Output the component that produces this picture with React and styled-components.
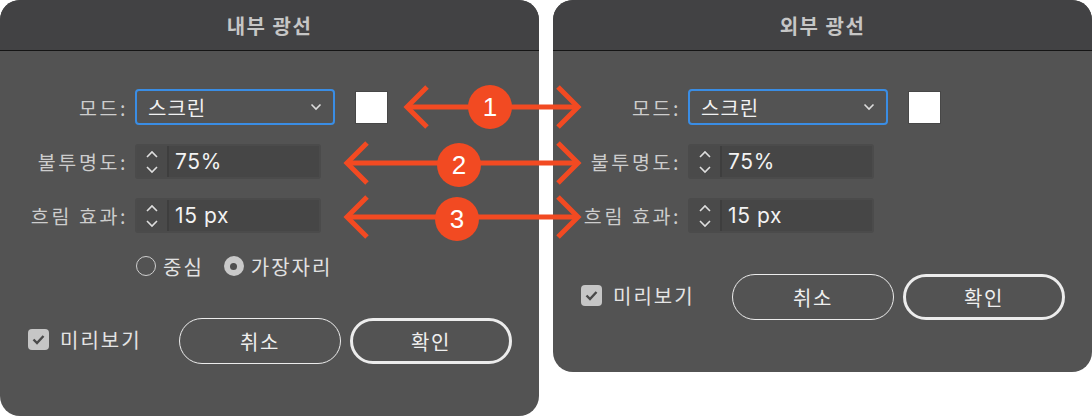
import styled, { createGlobalStyle } from "styled-components";

const panels = [
  { title: "내부 광선", edge: true },
  { title: "외부 광선", edge: false },
];

const markers = [
  { n: 1, y: 107, from: 407, cx: 490, cy: 107 },
  { n: 2, y: 163, from: 347, cx: 459, cy: 165 },
  { n: 3, y: 217, from: 347, cx: 457, cy: 219 },
];

const Global = createGlobalStyle`
  html, body {
    margin: 0;
    background: #fff;
  }
  body {
    font-family: "Inter", "Noto Sans CJK KR", sans-serif;
  }
`;

const Page = styled.div`
  position: relative;
  display: flex;
  align-items: flex-start;
  gap: 14px;
  width: 1092px;
  height: 418px;
  background: #fff;
  overflow: hidden;
`;

const Panel = styled.div`
  width: 539px;
  background: #535353;
  border-radius: 20px;
  overflow: hidden;
  padding-bottom: 52px;
`;

const TitleBar = styled.div`
  height: 50px;
  background: #424244;
  border-bottom: 1px solid #151515;
  display: flex;
  align-items: center;
  justify-content: center;
  font-family: "Noto Sans CJK KR", sans-serif;
  font-weight: 700;
  font-size: 20px;
  color: #c6c6c6;
  letter-spacing: 1.5px;
`;

const Form = styled.div`
  display: grid;
  grid-template-columns: 126px auto;
  column-gap: 9px;
  row-gap: 19px;
  align-items: center;
  justify-items: start;
  padding-top: 38px;
`;

const Label = styled.span`
  justify-self: end;
  margin-right: -2px;
  font-family: "Noto Sans CJK KR", sans-serif;
  font-size: 19.5px;
  color: #cdcdcd;
  letter-spacing: 2.6px;
  white-space: nowrap;
`;

const ModeRow = styled.div`
  display: flex;
  align-items: center;
  gap: 21px;
`;

const Select = styled.div`
  box-sizing: border-box;
  width: 200px;
  height: 36px;
  border: 2px solid #3a8de4;
  border-radius: 4px;
  padding: 0 11px 0 11px;
  display: flex;
  align-items: center;
  justify-content: space-between;
  font-family: "Noto Sans CJK KR", sans-serif;
  font-size: 20px;
  letter-spacing: 1px;
  color: #f2f2f2;
`;

const Swatch = styled.div`
  width: 31px;
  height: 31px;
  background: #fff;
  box-shadow: 0 0 0 1px #474747;
`;

const NumberField = styled.div`
  box-sizing: border-box;
  width: 186px;
  height: 35px;
  display: flex;
  border: 2px solid #4b4b4b;
  border-radius: 3px;
  background: #464646;
`;

const Stepper = styled.div`
  width: 30px;
  display: flex;
  align-items: center;
  justify-content: center;
  background: #4a4a4a;
  border-right: 2px solid #3e3e3e;
`;

const Value = styled.span`
  display: flex;
  align-items: center;
  padding-left: 6px;
  font-size: 21px;
  letter-spacing: 0.6px;
  color: #f3f3f3;
`;

const RadioRow = styled.div`
  grid-column: 2;
  display: flex;
  align-items: center;
  height: 22px;
  margin-top: 3px;
  padding-left: 1px;
  gap: 20px;
`;

const RadioItem = styled.label`
  display: flex;
  align-items: center;
  gap: 7px;
  font-family: "Noto Sans CJK KR", sans-serif;
  font-size: 20px;
  letter-spacing: 2px;
  color: #e2e2e2;
`;

const Radio = styled.span`
  flex: none;
  box-sizing: border-box;
  width: 20px;
  height: 20px;
  border-radius: 50%;
  border: ${(p) => (p.$on ? "none" : "1.5px solid #cfcfcf")};
  background: ${(p) => (p.$on ? "#c9c9c9" : "transparent")};
  display: flex;
  align-items: center;
  justify-content: center;
  &::after {
    content: "";
    display: ${(p) => (p.$on ? "block" : "none")};
    width: 7px;
    height: 7px;
    border-radius: 50%;
    background: #4f4f4f;
  }
`;

const Footer = styled.div`
  display: flex;
  align-items: center;
  justify-content: space-between;
  margin-top: 41px;
  padding: 0 27px 0 28px;
`;

const Preview = styled.label`
  display: flex;
  align-items: center;
  gap: 11px;
  font-family: "Noto Sans CJK KR", sans-serif;
  font-size: 20px;
  color: #e4e4e4;
  letter-spacing: 2px;
  margin-top: -3px;
`;

const Check = styled.span`
  width: 21px;
  height: 21px;
  border-radius: 4px;
  background: #c6c6c6;
  display: flex;
  align-items: center;
  justify-content: center;
`;

const Buttons = styled.div`
  display: flex;
  gap: 9px;
`;

const Button = styled.button`
  box-sizing: border-box;
  width: 162px;
  height: 46px;
  border-radius: 23px;
  background: transparent;
  border: ${(p) => (p.$primary ? "3px" : "1.5px")} solid #ececec;
  color: #efefef;
  font-family: "Noto Sans CJK KR", sans-serif;
  font-size: 20px;
  letter-spacing: 1.5px;
`;

const Overlay = styled.svg`
  position: absolute;
  left: 0;
  top: 0;
  pointer-events: none;
`;

const Chevron = () => (
  <svg width="12" height="8" viewBox="0 0 12 8">
    <path d="M1.5 1.5 L6 6 L10.5 1.5" fill="none" stroke="#dcdcdc" strokeWidth="1.6" />
  </svg>
);

const UpDown = () => (
  <svg width="14" height="26" viewBox="0 0 14 26">
    <path d="M2 8 L7 3 L12 8" fill="none" stroke="#dedede" strokeWidth="1.6" />
    <path d="M2 18 L7 23 L12 18" fill="none" stroke="#dedede" strokeWidth="1.6" />
  </svg>
);

const Tick = () => (
  <svg width="13" height="11" viewBox="0 0 13 11">
    <path d="M1.5 5.5 L5 9 L11.5 2" fill="none" stroke="#4a4a4a" strokeWidth="2.4" />
  </svg>
);

const Field = ({ value }) => (
  <NumberField>
    <Stepper>
      <UpDown />
    </Stepper>
    <Value>{value}</Value>
  </NumberField>
);

const GlowPanel = ({ title, edge }) => (
  <Panel>
    <TitleBar>{title}</TitleBar>
    <Form>
      <Label>모드:</Label>
      <ModeRow>
        <Select>
          스크린
          <Chevron />
        </Select>
        <Swatch />
      </ModeRow>
      <Label>불투명도:</Label>
      <Field value="75%" />
      <Label>흐림 효과:</Label>
      <Field value="15 px" />
      {edge && (
        <RadioRow>
          <RadioItem>
            <Radio />
            <span>중심</span>
          </RadioItem>
          <RadioItem>
            <Radio $on />
            <span>가장자리</span>
          </RadioItem>
        </RadioRow>
      )}
    </Form>
    <Footer>
      <Preview>
        <Check>
          <Tick />
        </Check>
        미리보기
      </Preview>
      <Buttons>
        <Button>취소</Button>
        <Button $primary>확인</Button>
      </Buttons>
    </Footer>
  </Panel>
);

const App = () => {
  const red = "#f24a22";
  return (
    <Page>
      <Global />
      {panels.map((p) => (
        <GlowPanel key={p.title} {...p} />
      ))}
      <Overlay width="1092" height="418" viewBox="0 0 1092 418">
        {markers.map((m) => (
          <g key={m.n}>
            <line x1={m.from + 2} y1={m.y} x2={576} y2={m.y} stroke={red} strokeWidth="5" />
            <path
              d={`M${m.from + 20} ${m.y - 20} L${m.from} ${m.y} L${m.from + 20} ${m.y + 20}`}
              fill="none"
              stroke={red}
              strokeWidth="5"
            />
            <path
              d={`M558 ${m.y - 20} L578 ${m.y} L558 ${m.y + 20}`}
              fill="none"
              stroke={red}
              strokeWidth="5"
            />
            <circle cx={m.cx} cy={m.cy} r="22" fill={red} />
            <text
              x={m.cx}
              y={m.cy + 9}
              textAnchor="middle"
              fill="#fff"
              fontSize="26"
              fontFamily="Liberation Sans, sans-serif"
            >
              {m.n}
            </text>
          </g>
        ))}
      </Overlay>
    </Page>
  );
};

export default App;
